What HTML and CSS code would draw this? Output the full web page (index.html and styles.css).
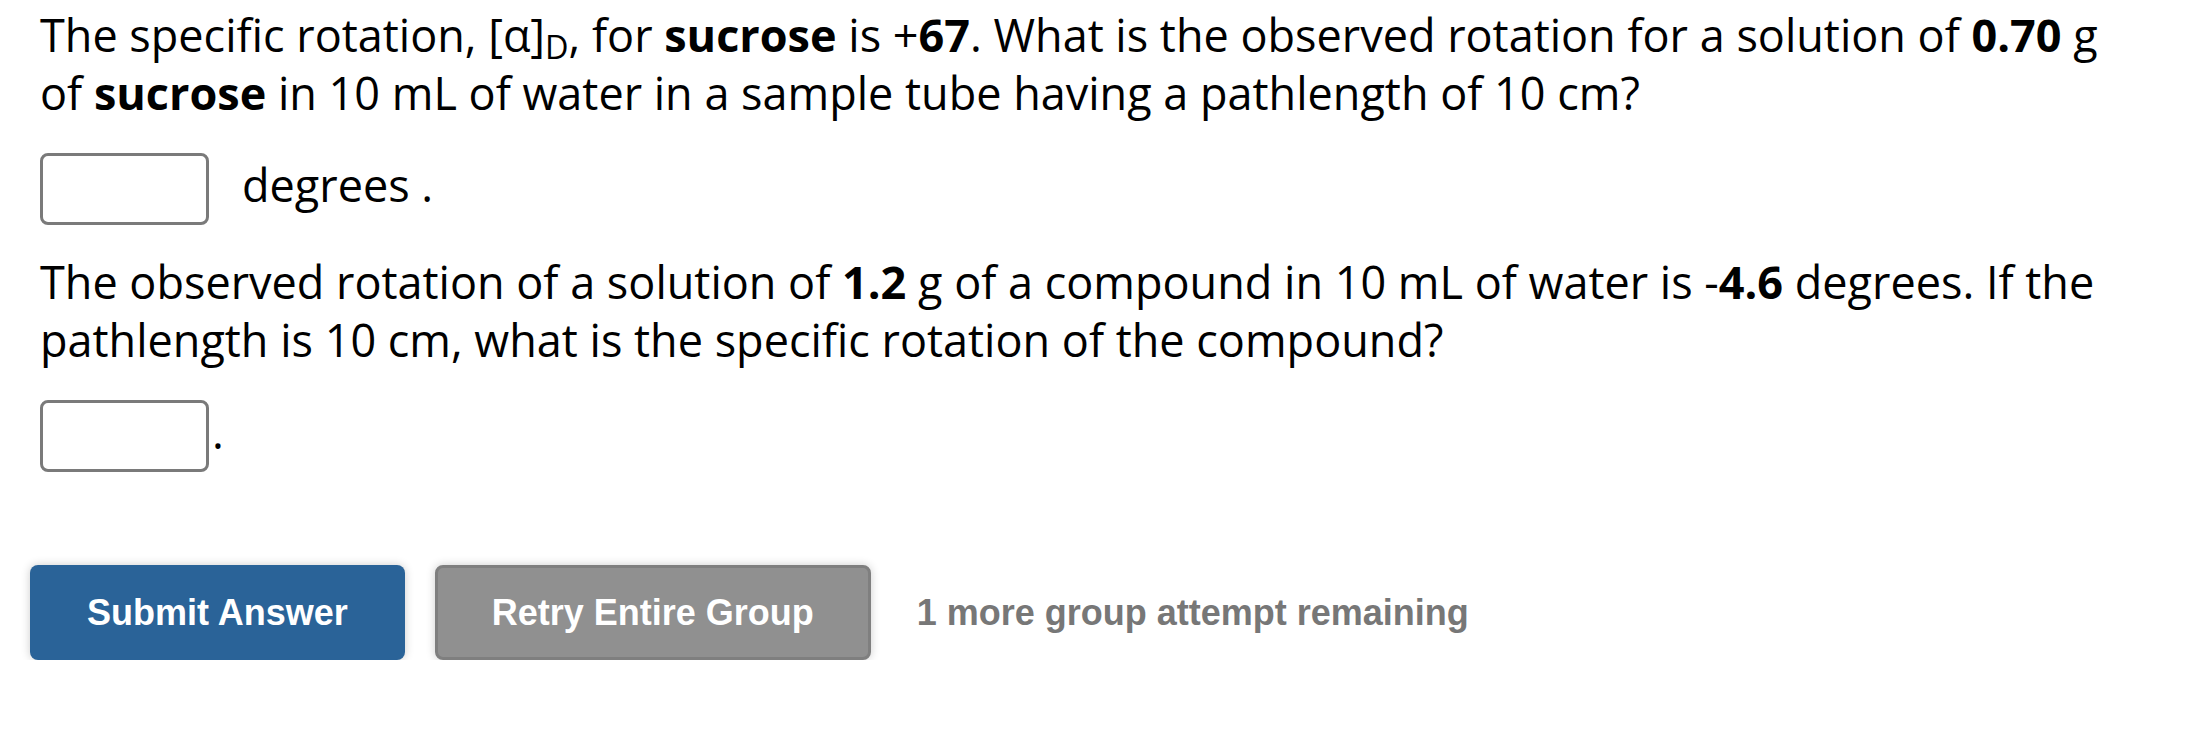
FILE: index.html
```html
<!DOCTYPE html>
<html lang="en">
<head>
    <meta charset="UTF-8">
    <title>Specific Rotation</title>
    <link rel="stylesheet" href="styles.css">
</head>
<body>
<div class="question">

<p>The specific rotation, [&alpha;]<sub>D</sub>, for <strong>sucrose</strong> is +<strong>67</strong>. What is the observed rotation for a solution of <strong>0.70</strong> g of <strong>sucrose</strong> in 10 mL of water in a sample tube having a pathlength of 10 cm?</p>

<div class="answer first">
    <input type="text" class="box">
    <span class="unit">degrees .</span>
</div>

<p>The observed rotation of a solution of <strong>1.2</strong> g of a compound in 10 mL of water is -<strong>4.6</strong> degrees. If the pathlength is 10 cm, what is the specific rotation of the compound?</p>

<div class="answer">
    <input type="text" class="box"><span class="dot">.</span>
</div>

<div class="actions">
    <button class="btn submit">Submit Answer</button>
    <button class="btn retry">Retry Entire Group</button>
    <span class="remaining">1 more group attempt remaining</span>
</div>

</div>
</body>
</html>
```

FILE: styles.css
```css
body {
    margin: 0;
    background: #fff;
    color: #000;
    font-family: 'Open Sans', sans-serif;
}
.question {
    max-width: 2100px;
    padding: 6px 0 0 40px;
}
p {
    margin: 0;
    font-size: 45px;
    line-height: 58px;
}
strong { font-weight: 700; }
sub {
    font-size: 0.72em;
    line-height: 0;
    vertical-align: -7px;
}
.answer {
    display: flex;
    align-items: center;
    margin: 31px 0 0;
    font-size: 45px;
    line-height: 58px;
}
.answer.first { margin-bottom: 28px; }
.box {
    width: 169px;
    height: 72px;
    box-sizing: border-box;
    border: 3px solid #7a7a7a;
    border-radius: 8px;
    margin: 0;
    padding: 0;
    background: #fff;
}
.unit { margin: 0 0 9px 33px; }
.dot { margin: 0 0 9px 3px; }
.actions {
    display: flex;
    align-items: center;
    gap: 30px;
    margin-top: 93px;
    margin-left: -10px;
    font-family: 'Liberation Sans', Arial, sans-serif;
    font-weight: 700;
    font-size: 36px;
}
.btn {
    height: 95px;
    padding: 0 57px;
    border-radius: 8px;
    color: #fff;
    font: inherit;
    box-shadow: 0 0 10px rgba(0, 0, 0, 0.2);
}
.submit {
    background: #2a6398;
    border: none;
}
.retry {
    padding: 0 54px;
    background: #909090;
    border: 3px solid #7f7f7f;
}
.remaining {
    color: #777;
    margin-left: 16px;
}
```
